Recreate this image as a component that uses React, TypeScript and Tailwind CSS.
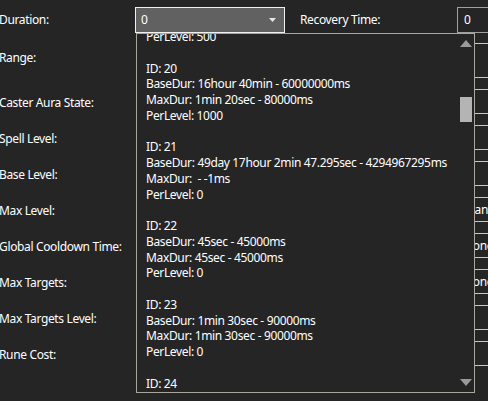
import React from "react";

const entries = [
  { id: 20, base: "16hour 40min - 60000000ms", max: "1min 20sec - 80000ms", per: "1000" },
  { id: 21, base: "49day 17hour 2min 47.295sec - 4294967295ms", max: " - -1ms", per: "0" },
  { id: 22, base: "45sec - 45000ms", max: "45sec - 45000ms", per: "0" },
  { id: 23, base: "1min 30sec - 90000ms", max: "1min 30sec - 90000ms", per: "0" },
  { id: 24, base: "2min - 120000ms", max: "2min - 120000ms", per: "0" },
];

const rows = [
  { label: "Range:", h: "h-[35px] mt-[10px]", box: "" },
  { label: "Caster Aura State:", h: "h-[25px] mt-[11px]", box: "" },
  { label: "Spell Level:", h: "h-[25px] mt-[11px]", box: "" },
  { label: "Base Level:", h: "h-[25px] mt-[11px]", box: "" },
  { label: "Max Level:", h: "h-[25px] mt-[11px]", box: "Mana" },
  { label: "Global Cooldown Time:", h: "h-[25px] mt-[11px]", box: "None" },
  { label: "Max Targets:", h: "h-[25px] mt-[11px]", box: "None" },
  { label: "Max Targets Level:", h: "h-[25px] mt-[11px]", box: "" },
  { label: "Rune Cost:", h: "h-[25px] mt-[11px]", box: "" },
];

export default function App() {
  return (
    <div className="relative w-[488px] h-[401px] overflow-hidden bg-[#252526] text-[12px] tracking-[-0.35px] text-white font-['Noto_Sans',sans-serif]">
      {/* form */}
      <div className="flex flex-col">
        <div className="flex h-[26px] mt-[7px] items-center">
          <div className="w-[136px] shrink-0 -ml-[1px]">Duration:</div>
          <div className="w-[150px] shrink-0 h-full flex items-center justify-between bg-[#616161] border border-[#f0f0f0] pl-[5px] pr-[8px]">
            <span>0</span>
            <svg width="7" height="4" viewBox="0 0 7 4">
              <path d="M0 0H7L3.5 4Z" fill="#e6e6e6" />
            </svg>
          </div>
          <div className="w-[172px] shrink-0 pl-[15px]">Recovery Time:</div>
          <div className="flex-1 h-full flex items-center border border-[#a0a0a0] border-r-0 pl-[6px]">0</div>
        </div>

        {rows.map((r, i) => (
          <div key={i} className={`flex ${r.h}`}>
            <div className={`w-[136px] shrink-0 -ml-[1px] ${i === 0 ? "pt-[6px]" : "flex items-center pt-[2px]"}`}>{r.label}</div>
            <div className="flex-1" />
            <div className="w-[30px] shrink-0 h-full flex items-center border-y border-[#c8c8c8] pl-[6px] overflow-hidden whitespace-nowrap">{r.box}</div>
          </div>
        ))}
      </div>

      {/* opened dropdown list */}
      <div className="absolute left-[136px] top-[33px] w-[339px] h-[360px] border border-[#a9a79b] bg-[#252526] overflow-hidden">
        <div className="-mt-[5px] pl-[9px] leading-[15.75px] whitespace-pre">
          <div>PerLevel: 500</div>
          <div>&nbsp;</div>
          {entries.map((e) => (
            <div key={e.id}>
              <div>ID: {e.id}</div>
              <div>BaseDur: {e.base}</div>
              <div>MaxDur: {e.max}</div>
              <div>PerLevel: {e.per}</div>
              <div>&nbsp;</div>
            </div>
          ))}
        </div>

        {/* scrollbar */}
        <div className="absolute right-0 top-0 bottom-0 w-[16px] flex flex-col items-center">
          <svg className="mt-[6px]" width="12" height="7" viewBox="0 0 12 7">
            <path d="M0 7L6 0L12 7Z" fill="#9a9a9a" />
          </svg>
          <div className="mt-[50px] w-[12px] h-[25px] bg-[#b4b4b4]" />
          <div className="flex-1" />
          <svg className="mb-[6px]" width="12" height="7" viewBox="0 0 12 7">
            <path d="M0 0H12L6 7Z" fill="#9a9a9a" />
          </svg>
        </div>
      </div>
    </div>
  );
}
